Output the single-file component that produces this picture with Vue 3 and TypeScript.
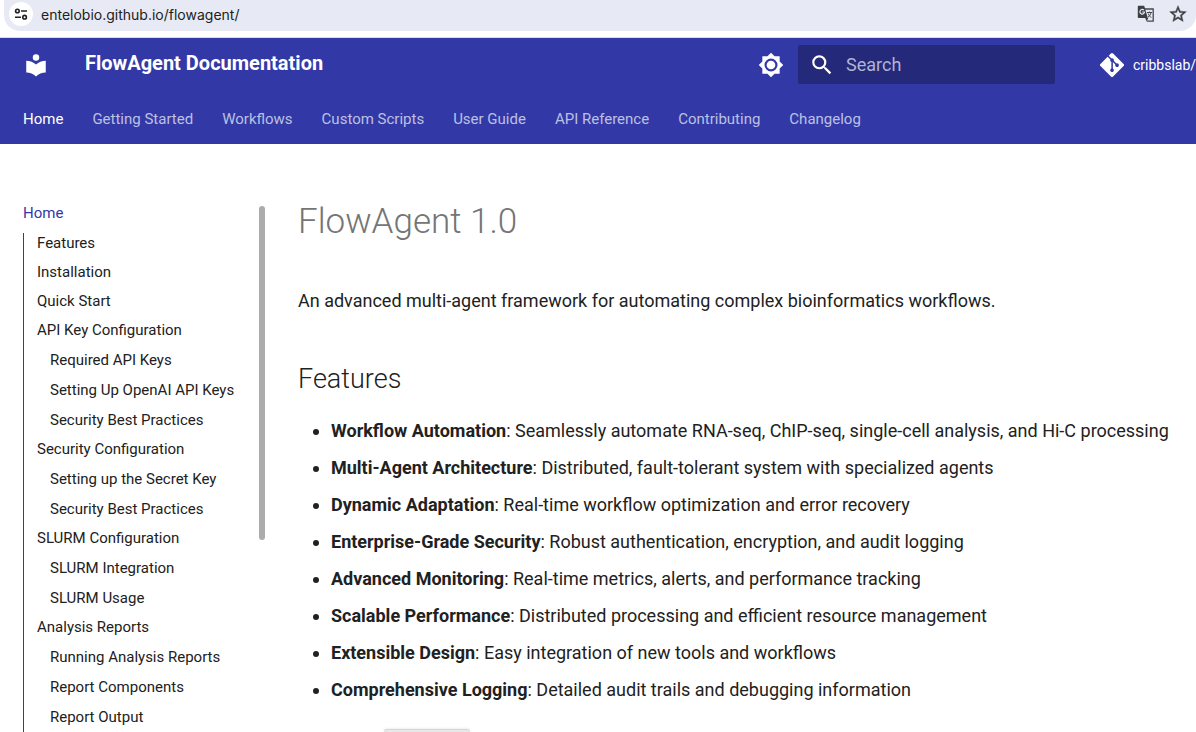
<script setup lang="ts">
interface NavItem {
  label: string
  children?: string[]
}

interface Feature {
  name: string
  text: string
}

const tabs: string[] = [
  'Home',
  'Getting Started',
  'Workflows',
  'Custom Scripts',
  'User Guide',
  'API Reference',
  'Contributing',
  'Changelog',
]

const toc: NavItem[] = [
  { label: 'Features' },
  { label: 'Installation' },
  { label: 'Quick Start' },
  {
    label: 'API Key Configuration',
    children: ['Required API Keys', 'Setting Up OpenAI API Keys', 'Security Best Practices'],
  },
  {
    label: 'Security Configuration',
    children: ['Setting up the Secret Key', 'Security Best Practices'],
  },
  { label: 'SLURM Configuration', children: ['SLURM Integration', 'SLURM Usage'] },
  {
    label: 'Analysis Reports',
    children: ['Running Analysis Reports', 'Report Components', 'Report Output'],
  },
]

const features: Feature[] = [
  { name: 'Workflow Automation', text: 'Seamlessly automate RNA-seq, ChIP-seq, single-cell analysis, and Hi-C processing' },
  { name: 'Multi-Agent Architecture', text: 'Distributed, fault-tolerant system with specialized agents' },
  { name: 'Dynamic Adaptation', text: 'Real-time workflow optimization and error recovery' },
  { name: 'Enterprise-Grade Security', text: 'Robust authentication, encryption, and audit logging' },
  { name: 'Advanced Monitoring', text: 'Real-time metrics, alerts, and performance tracking' },
  { name: 'Scalable Performance', text: 'Distributed processing and efficient resource management' },
  { name: 'Extensible Design', text: 'Easy integration of new tools and workflows' },
  { name: 'Comprehensive Logging', text: 'Detailed audit trails and debugging information' },
]
</script>

<template>
  <div class="window">
    <div class="toolbar">
      <div class="address">
        <button class="site-info" type="button" aria-label="View site information">
          <svg viewBox="0 0 14 14" width="14" height="14" fill="none" stroke="#202124" stroke-width="1.6">
            <circle cx="3.4" cy="4" r="1.8" />
            <path d="M7 4h6M1 10.2h6" />
            <circle cx="10.6" cy="10.2" r="1.8" />
          </svg>
        </button>
        <label class="url">
          <input type="text" aria-label="Address" value="entelobio.github.io/flowagent/" />
        </label>
        <button class="tool" type="button" aria-label="Translate this page">
          <svg viewBox="0 0 18 18" width="18" height="18">
            <path d="M8 4h8.2v12.2H9.8" fill="none" stroke="#46484c" stroke-width="1.3" />
            <path d="M1.6.8h5.6l3.6 12.2H1.6A.9.9 0 0 1 .8 12V1.7a.9.9 0 0 1 .8-.9z" fill="#3c4043" />
            <path d="M8.2 13l1.5 3.6 1.6-3.6z" fill="#3c4043" />
            <path d="M6.9 5.2A2.3 2.3 0 1 0 7.5 7H5.2" fill="none" stroke="#e7eaf5" stroke-width="1.2" />
            <path d="M10 7.5h5M12.4 6.5v1M14 7.6c-.4 2-1.6 3.6-3 4.6M11.2 8.5c.6 1.7 1.6 3 3 4.2" fill="none" stroke="#46484c" stroke-width="1" />
          </svg>
        </button>
        <button class="tool" type="button" aria-label="Bookmark this page">
          <svg viewBox="0 0 24 24" width="20" height="20" fill="#3c4043" stroke="#3c4043" stroke-width=".5">
            <path d="M22 9.24l-7.19-.62L12 2 9.19 8.63 2 9.24l5.46 4.73L5.82 21 12 17.27 18.18 21l-1.63-7.03L22 9.24zM12 15.4l-3.76 2.27 1-4.28-3.32-2.88 4.38-.38L12 6.1l1.71 4.04 4.38.38-3.32 2.88 1 4.28L12 15.4z" />
          </svg>
        </button>
      </div>
    </div>

    <header class="header">
      <div class="header-row">
        <a class="logo" href="#" aria-label="FlowAgent Documentation">
          <svg viewBox="0 0 24 24" width="26" height="26" fill="#fff">
            <path d="M12 8a3 3 0 0 0 3-3 3 3 0 0 0-3-3 3 3 0 0 0-3 3 3 3 0 0 0 3 3m0 3.54C9.64 9.35 6.5 8 3 8v11c3.5 0 6.64 1.35 9 3.54 2.36-2.19 5.5-3.54 9-3.54V8c-3.5 0-6.64 1.35-9 3.54z" />
          </svg>
        </a>
        <span class="title">FlowAgent Documentation</span>
        <button class="theme" type="button" aria-label="Switch to dark mode">
          <svg viewBox="0 0 24 24" width="26" height="26" fill="#fff">
            <path d="M12 8a4 4 0 0 0-4 4 4 4 0 0 0 4 4 4 4 0 0 0 4-4 4 4 0 0 0-4-4m0 10a6 6 0 0 1-6-6 6 6 0 0 1 6-6 6 6 0 0 1 6 6 6 6 0 0 1-6 6m8-9.31V4h-4.69L12 .69 8.69 4H4v4.69L.69 12 4 15.31V20h4.69L12 23.31 15.31 20H20v-4.69L23.31 12 20 8.69z" />
          </svg>
        </button>
        <form class="search" role="search" @submit.prevent>
          <svg viewBox="0 0 24 24" width="26" height="26" fill="#fff">
            <path d="M9.5 3A6.5 6.5 0 0 1 16 9.5c0 1.61-.59 3.09-1.56 4.23l.27.27h.79l5 5-1.5 1.5-5-5v-.79l-.27-.27A6.516 6.516 0 0 1 9.5 16 6.5 6.5 0 0 1 3 9.5 6.5 6.5 0 0 1 9.5 3m0 2C7 5 5 7 5 9.5S7 14 9.5 14 14 12 14 9.5 12 5 9.5 5z" />
          </svg>
          <input type="text" aria-label="Search" placeholder="Search" />
        </form>
        <a class="source" href="#">
          <svg viewBox="0 0 448 512" width="24" height="28" fill="#fff">
            <path d="M439.55 236.05 244 40.45a28.87 28.87 0 0 0-40.81 0l-40.66 40.63 51.52 51.52c27.06-9.14 52.68 16.77 43.39 43.68l49.66 49.66c34.23-11.8 61.18 31 35.47 56.69-26.49 26.49-70.21-2.87-56-37.34L240.22 199v121.85c25.3 12.54 22.26 41.85 9.08 55a34.34 34.34 0 0 1-48.55 0c-17.57-17.6-11.07-46.91 11.25-56v-123c-20.8-8.51-24.6-30.74-18.64-45L142.57 101 8.45 235.14a28.86 28.86 0 0 0 0 40.81l195.61 195.6a28.86 28.86 0 0 0 40.8 0l194.69-194.69a28.86 28.86 0 0 0 0-40.81z" />
          </svg>
          <span>cribbslab/</span>
        </a>
      </div>
      <nav class="tabs" aria-label="Tabs">
        <a v-for="(tab, i) in tabs" :key="tab" href="#" :class="{ active: i === 0 }">{{ tab }}</a>
      </nav>
    </header>

    <div class="body">
      <aside class="sidebar">
        <nav class="side-nav" aria-label="Table of contents">
          <a class="current" href="#">Home</a>
          <ul class="toc">
            <li v-for="item in toc" :key="item.label">
              <a href="#">{{ item.label }}</a>
              <ul v-if="item.children" class="sub">
                <li v-for="child in item.children" :key="child">
                  <a href="#">{{ child }}</a>
                </li>
              </ul>
            </li>
          </ul>
        </nav>
        <div class="thumb"></div>
      </aside>

      <main class="content">
        <h1>FlowAgent 1.0</h1>
        <p>An advanced multi-agent framework for automating complex bioinformatics workflows.</p>
        <h2>Features</h2>
        <ul class="features">
          <li v-for="f in features" :key="f.name">
            <strong>{{ f.name }}</strong>: {{ f.text }}
          </li>
        </ul>
      </main>
    </div>
    <div class="status"></div>
  </div>
</template>

<style>
body {
  margin: 0;
  background: #fff;
}
</style>

<style scoped>
.window {
  position: relative;
  display: flex;
  flex-direction: column;
  height: 100vh;
  overflow: hidden;
  background: #fff;
  color: #212121;
  font-family: Roboto, "Liberation Sans", sans-serif;
}

a {
  color: inherit;
  text-decoration: none;
}

button {
  display: grid;
  place-items: center;
  padding: 0;
  border: 0;
  background: none;
}

input {
  min-width: 0;
  padding: 0;
  border: 0;
  outline: 0;
  background: none;
  color: inherit;
  font: inherit;
}

svg {
  display: block;
  flex: none;
}

ul {
  margin: 0;
  padding: 0;
}

.toolbar {
  flex: none;
  padding: 0 0 6px 4px;
  border-bottom: 1px solid #dadce0;
}

.address {
  display: flex;
  align-items: center;
  gap: 12px;
  height: 31px;
  padding: 0 8px 3px 5px;
  box-sizing: border-box;
  border-radius: 0 0 16px 16px;
  background: #e7eaf5;
}

.site-info {
  width: 24px;
  height: 24px;
  border-radius: 12px;
  background: #fff;
}

.url {
  display: flex;
  flex: 1;
  margin-left: -4px;
  font-family: Inter, Roboto, sans-serif;
  font-size: 14px;
}

.url input {
  flex: 1;
}

.tool {
  width: 20px;
  height: 20px;
}

.header {
  flex: none;
  background: #3239a7;
  color: #fff;
}

.header-row {
  display: flex;
  align-items: center;
  height: 53px;
  padding-left: 23px;
}

.logo {
  margin-right: 36px;
}

.title {
  flex: 1;
  padding-bottom: 3px;
  font-size: 20px;
  font-weight: 700;
  line-height: 26px;
  white-space: nowrap;
}

.theme {
  margin-right: 14px;
}

.search {
  display: flex;
  align-items: center;
  gap: 11px;
  width: 257px;
  height: 39px;
  padding: 0 11px;
  box-sizing: border-box;
  border-radius: 2px;
  background: #242a79;
  font-size: 18px;
}

.search input {
  flex: 1;
}

.search input::placeholder {
  color: #b1b3d0;
  opacity: 1;
}

.source {
  display: flex;
  align-items: center;
  gap: 9px;
  width: 96px;
  margin-left: 45px;
  font-size: 14px;
  white-space: nowrap;
}

.tabs {
  display: flex;
  gap: 29px;
  height: 53px;
  padding: 17px 23px 0;
  box-sizing: border-box;
  color: #bdc0e2;
  font-size: 15px;
  line-height: 22px;
  white-space: nowrap;
}

.tabs .active {
  color: #fff;
}

.body {
  display: flex;
  flex: 1;
  min-height: 0;
  padding-top: 59px;
}

.sidebar {
  display: flex;
  flex: none;
  justify-content: space-between;
  width: 242px;
  padding-left: 23px;
  font-size: 15px;
  line-height: 20px;
}

.side-nav {
  display: flex;
  flex-direction: column;
  gap: 10px;
  white-space: nowrap;
}

.side-nav a {
  display: block;
}

.current {
  color: #3239a7;
}

.toc {
  display: flex;
  flex: 1;
  flex-direction: column;
  gap: 9px;
  padding-left: 13px;
  border-left: 1px solid #3239a7;
  list-style: none;
}

.sub {
  display: flex;
  flex-direction: column;
  gap: 10px;
  padding: 10px 0 0 13px;
  list-style: none;
}

.thumb {
  width: 6px;
  height: 334px;
  margin-top: 3px;
  border-radius: 3px;
  background: #acacac;
}

.content {
  flex: 1;
  min-width: 0;
  padding: 0 16px 0 33px;
  font-size: 18px;
  line-height: 28px;
}

h1 {
  margin: 0 0 46px;
  color: #757575;
  font-size: 35px;
  font-weight: 300;
  line-height: 38px;
}

p {
  margin: 0;
}

h2 {
  margin: 45px 0 19px;
  font-size: 27px;
  font-weight: 300;
  line-height: 38px;
}

.features {
  display: flex;
  flex-direction: column;
  gap: 9px;
  padding-left: 33px;
}

.status {
  position: absolute;
  bottom: 0;
  left: 384px;
  width: 86px;
  height: 3px;
  box-sizing: border-box;
  border-top: 1px solid #d6d6d6;
  border-radius: 3px 3px 0 0;
  background: #e8e8e8;
  box-shadow: 0 0 3px #e0e0e0;
}
</style>
